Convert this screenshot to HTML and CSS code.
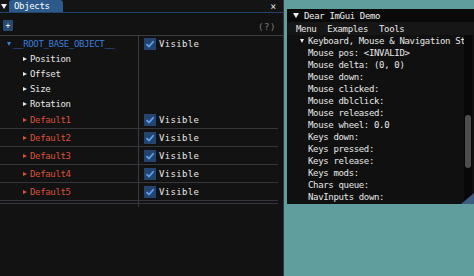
FILE: index.html
```html
<!DOCTYPE html>
<html lang="en">
<head>
    <meta charset="UTF-8">
    <meta name="viewport" content="width=device-width, initial-scale=1.0">
    <title>Objects</title>
    <link rel="stylesheet" href="styles.css">
</head>
<body>
    <div class="objects">
        <div class="tabbar">
            <span class="tri-down menu-btn"></span>
            <div class="tab">Objects</div>
            <span class="close">×</span>
        </div>
        <div class="toolbar">
            <button class="add">+</button>
            <span class="help">(?)</span>
        </div>
        <div class="table">
            <div class="row">
                <div class="name lvl0 root"><span class="tri-down"></span>__ROOT_BASE_OBJECT__</div>
                <div class="vis"><span class="check"><svg width="12" height="12" viewBox="0 0 12 12"><polyline points="2.5,6.2 5,8.6 9.6,3.2" fill="none" stroke="#5fa2f5" stroke-width="1.7"/></svg></span>Visible</div>
            </div>
            <div class="row"><div class="name lvl1"><span class="tri-right"></span>Position</div><div class="vis"></div></div>
            <div class="row"><div class="name lvl1"><span class="tri-right"></span>Offset</div><div class="vis"></div></div>
            <div class="row"><div class="name lvl1"><span class="tri-right"></span>Size</div><div class="vis"></div></div>
            <div class="row"><div class="name lvl1"><span class="tri-right"></span>Rotation</div><div class="vis"></div></div>
            <div class="row obj">
                <div class="name lvl1 red"><span class="tri-right"></span>Default1</div>
                <div class="vis"><span class="check"><svg width="12" height="12" viewBox="0 0 12 12"><polyline points="2.5,6.2 5,8.6 9.6,3.2" fill="none" stroke="#5fa2f5" stroke-width="1.7"/></svg></span>Visible</div>
            </div>
            <div class="row obj">
                <div class="name lvl1 red"><span class="tri-right"></span>Default2</div>
                <div class="vis"><span class="check"><svg width="12" height="12" viewBox="0 0 12 12"><polyline points="2.5,6.2 5,8.6 9.6,3.2" fill="none" stroke="#5fa2f5" stroke-width="1.7"/></svg></span>Visible</div>
            </div>
            <div class="row obj">
                <div class="name lvl1 red"><span class="tri-right"></span>Default3</div>
                <div class="vis"><span class="check"><svg width="12" height="12" viewBox="0 0 12 12"><polyline points="2.5,6.2 5,8.6 9.6,3.2" fill="none" stroke="#5fa2f5" stroke-width="1.7"/></svg></span>Visible</div>
            </div>
            <div class="row obj">
                <div class="name lvl1 red"><span class="tri-right"></span>Default4</div>
                <div class="vis"><span class="check"><svg width="12" height="12" viewBox="0 0 12 12"><polyline points="2.5,6.2 5,8.6 9.6,3.2" fill="none" stroke="#5fa2f5" stroke-width="1.7"/></svg></span>Visible</div>
            </div>
            <div class="row obj">
                <div class="name lvl1 red"><span class="tri-right"></span>Default5</div>
                <div class="vis"><span class="check"><svg width="12" height="12" viewBox="0 0 12 12"><polyline points="2.5,6.2 5,8.6 9.6,3.2" fill="none" stroke="#5fa2f5" stroke-width="1.7"/></svg></span>Visible</div>
            </div>
            <div class="row gap"><div class="name"></div><div class="vis"></div></div>
            <div class="row tail"><div class="name"></div><div class="vis"></div></div>
        </div>
    </div>

    <div class="demo">
        <div class="titlebar"><span class="tri-down"></span>Dear ImGui Demo</div>
        <div class="menubar">
            <span>Menu</span>
            <span>Examples</span>
            <span>Tools</span>
        </div>
        <div class="demo-body">
            <div class="lines">
                <div class="head"><span class="tri-down"></span>Keyboard, Mouse &amp; Navigation State</div>
                <div class="line">Mouse pos: &lt;INVALID&gt;</div>
                <div class="line">Mouse delta: (0, 0)</div>
                <div class="line">Mouse down:</div>
                <div class="line">Mouse clicked:</div>
                <div class="line">Mouse dblclick:</div>
                <div class="line">Mouse released:</div>
                <div class="line">Mouse wheel: 0.0</div>
                <div class="line">Keys down:</div>
                <div class="line">Keys pressed:</div>
                <div class="line">Keys release:</div>
                <div class="line">Keys mods:</div>
                <div class="line">Chars queue:</div>
                <div class="line">NavInputs down:</div>
            </div>
            <div class="scrollbar"><div class="grab"></div></div>
        </div>
        <div class="grip"></div>
    </div>
</body>
</html>
```

FILE: styles.css
```css
body {
    background: #609e9e;
    color: #e8e8e8;
    font-family: "DejaVu Sans Mono", monospace;
    font-size: 9px;
    letter-spacing: -0.34px;
    margin: 0;
    padding: 0;
    height: 276px;
    overflow: hidden;
}
.objects {
    width: 283px;
    height: 276px;
    background: #121212;
    border-right: 1px solid #34343a;
}
.tri-down {
    display: inline-block;
    width: 0;
    height: 0;
    border-left: 2.5px solid transparent;
    border-right: 2.5px solid transparent;
    border-top: 4px solid currentColor;
    vertical-align: middle;
}
.tri-right {
    display: inline-block;
    width: 0;
    height: 0;
    border-top: 2.5px solid transparent;
    border-bottom: 2.5px solid transparent;
    border-left: 4px solid currentColor;
    vertical-align: middle;
}
.tabbar {
    height: 12px;
    display: flex;
    align-items: center;
    border-bottom: 1px solid #22436c;
    background: #141414;
}
.menu-btn {
    color: #f0f0f0;
    margin-left: 1px;
    border-left-width: 3px;
    border-right-width: 3px;
    border-top-width: 5px;
}
.tab {
    margin-left: 2px;
    height: 12px;
    line-height: 12px;
    width: 49px;
    padding-left: 5px;
    background: #2c5a8c;
    border-radius: 3px 3px 0 0;
    color: #ffffff;
}
.close {
    margin-left: auto;
    margin-right: 7px;
    font-size: 10px;
    color: #e0e0e0;
}
.toolbar {
    height: 22px;
    display: flex;
    align-items: center;
    border-bottom: 1px solid #3a3a3f;
}
.add {
    width: 10px;
    height: 11px;
    margin: 2px 0 0 3px;
    padding: 0;
    border: none;
    border-radius: 1px;
    background: #28496f;
    color: #ffffff;
    font-family: "DejaVu Sans Mono", monospace;
    font-size: 8px;
    line-height: 11px;
}
.help {
    margin-left: auto;
    margin-right: 7px;
    margin-top: 6px;
    color: #7c7c7c;
    letter-spacing: 0.6px;
}
.table {
    width: 278px;
}
.row {
    display: flex;
    height: 15px;
    align-items: center;
}
.row.obj {
    height: 17px;
    border-bottom: 1px solid #35353b;
}
.row.gap {
    height: 2px;
    border-bottom: 1px solid #35353b;
}
.row.tail {
    height: 3px;
}
.name {
    width: 138px;
    height: 100%;
    display: flex;
    align-items: center;
    border-right: 1px solid #3a3a40;
    white-space: nowrap;
}
.name span {
    margin-right: 3px;
}
.lvl0 {
    padding-left: 7px;
    width: 131px;
}
.lvl0 .tri-down {
    margin-right: 2px;
}
.lvl1 {
    padding-left: 23px;
    width: 115px;
}
.root {
    color: #3c7dd8;
}
.red {
    color: #df5038;
}
.vis {
    display: flex;
    align-items: center;
    padding-left: 5px;
    letter-spacing: 0.35px;
}
.check {
    width: 12px;
    height: 12px;
    background: #23446e;
    margin-right: 3px;
    display: flex;
}
.demo {
    position: absolute;
    left: 287px;
    top: 9px;
    width: 187px;
    height: 195px;
    background: #101010;
    display: flex;
    flex-direction: column;
    overflow: hidden;
}
.titlebar {
    height: 13px;
    background: #0a0a0a;
    display: flex;
    align-items: center;
    padding-left: 6px;
    color: #f0f0f0;
}
.titlebar .tri-down {
    margin-right: 5px;
    border-left-width: 3px;
    border-right-width: 3px;
    border-top-width: 5px;
}
.menubar {
    height: 13px;
    background: #161616;
    display: flex;
    align-items: center;
    padding-left: 9px;
    gap: 11px;
}
.demo-body {
    flex: 1;
    display: flex;
    overflow: hidden;
}
.lines {
    flex: 1;
    overflow: hidden;
    white-space: nowrap;
    padding-left: 21px;
}
.head {
    height: 12px;
    line-height: 12px;
    margin-left: -8px;
}
.head .tri-down {
    margin-right: 4px;
    vertical-align: 1px;
}
.line {
    height: 12px;
    line-height: 12px;
}
.scrollbar {
    width: 8px;
    margin-right: 2px;
    background: #080808;
    position: relative;
}
.grab {
    position: absolute;
    left: 1px;
    right: 1px;
    top: 80px;
    height: 53px;
    border-radius: 3px;
    background: #4e4e4e;
}
.grip {
    position: absolute;
    right: 0;
    bottom: 0;
    width: 13px;
    height: 11px;
    background: #3a5c80;
    clip-path: polygon(100% 0, 100% 100%, 0 100%);
}
```
